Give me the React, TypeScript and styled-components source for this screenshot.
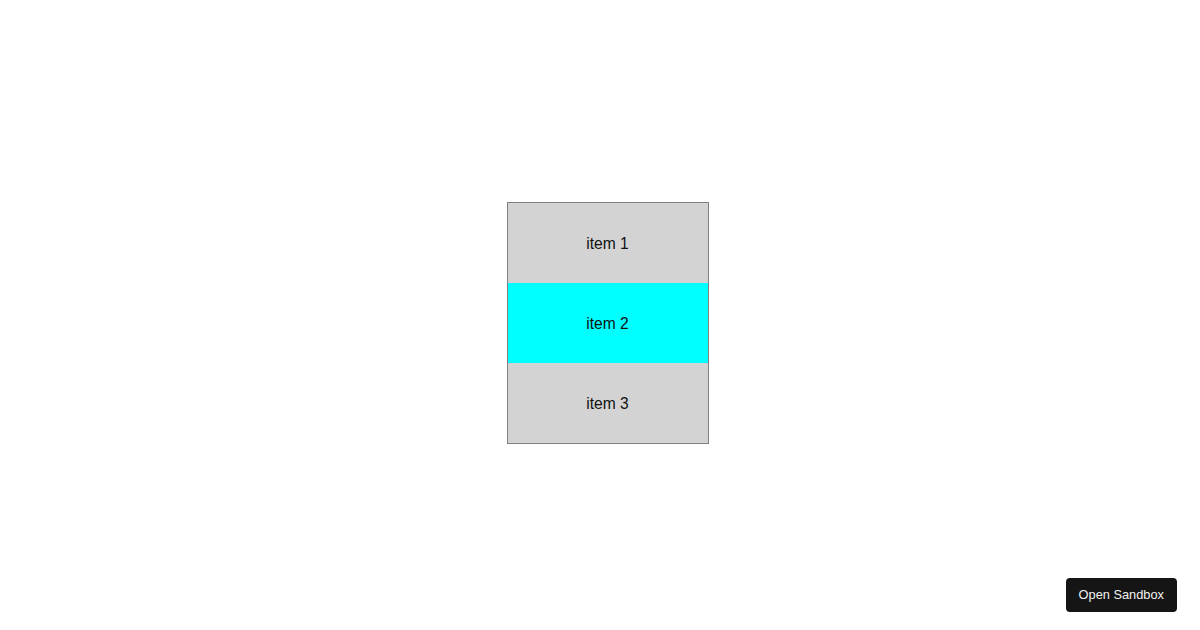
import React from "react";
import styled, { createGlobalStyle } from "styled-components";

const Global = createGlobalStyle`
  html, body { margin: 0; padding: 0; background: #ffffff; }
  body { font-family: "Liberation Sans", Arial, sans-serif; }
`;

const Page = styled.div`
  box-sizing: border-box;
  width: 100%;
  height: 630px;
  padding: 15px 0 0 15px;
  display: flex;
  align-items: center;
  justify-content: center;
`;

const List = styled.div`
  width: 200px;
  border: 1px solid #808080;
  display: flex;
  flex-direction: column;
`;

const Item = styled.div<{ $active?: boolean }>`
  box-sizing: border-box;
  height: 80px;
  padding-top: 2px;
  display: flex;
  align-items: center;
  justify-content: center;
  background: ${(p) => (p.$active ? "#00ffff" : "#d3d3d3")};
  color: #111;
  font-size: 15.6px;
`;

const SandboxButton = styled.button`
  position: fixed;
  right: 23px;
  bottom: 18px;
  height: 34px;
  padding: 0 13px 2px;
  border: none;
  border-radius: 4px;
  background: #151515;
  color: #f2f2f2;
  font-family: "Liberation Sans", Arial, sans-serif;
  font-size: 12.8px;
  cursor: pointer;
`;

export default function App() {
  const items = ["item 1", "item 2", "item 3"];
  return (
    <>
      <Global />
      <Page>
        <List>
          {items.map((t, i) => (
            <Item key={t} $active={i === 1}>
              {t}
            </Item>
          ))}
        </List>
      </Page>
      <SandboxButton>Open Sandbox</SandboxButton>
    </>
  );
}
